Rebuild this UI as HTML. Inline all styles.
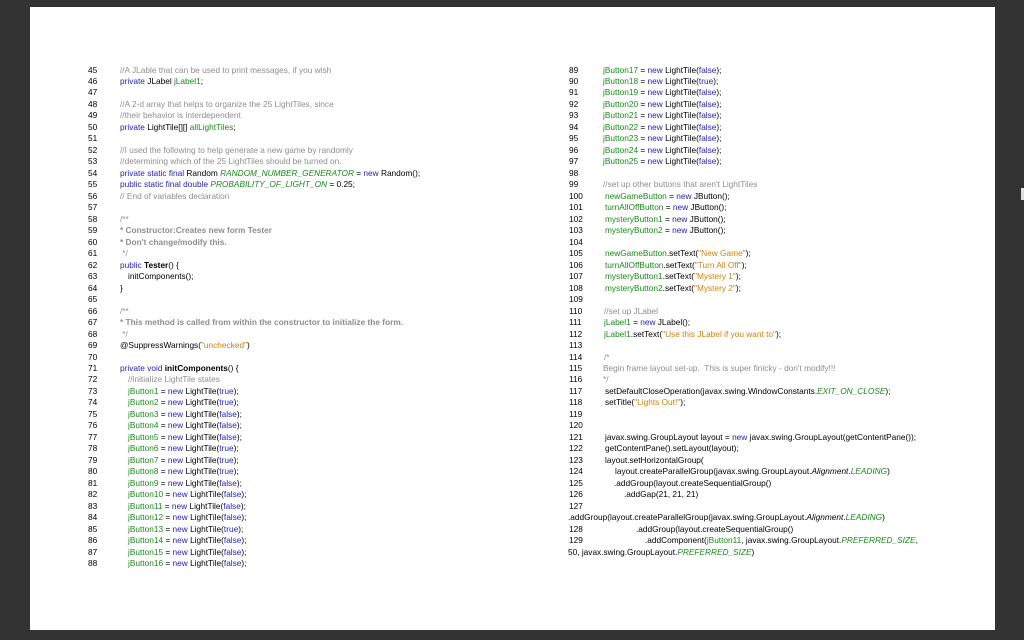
<!DOCTYPE html>
<html><head><meta charset="utf-8">
<style>
html,body{margin:0;padding:0;}
body{width:1024px;height:640px;background:#333;position:relative;overflow:hidden;font-family:"Liberation Sans",sans-serif;font-size:8.3px;color:#000;}
#page{position:absolute;left:30px;top:7px;width:965px;height:623px;background:#fff;}
.l{position:absolute;white-space:pre;line-height:10px;height:10px;}
.n{position:absolute;white-space:pre;line-height:10px;}
.k{color:#2424b0}.g{color:#1a8a1a}.c{color:#8e8e8e}.s{color:#c8840c}.b{font-weight:bold}.i{font-style:italic}
#mark{position:absolute;left:1021px;top:188px;width:3px;height:12px;background:#ddd;}
</style></head><body>
<div id="page"></div>
<div id="mark"></div>
<div id="L"></div>
<div id="R"></div>
<script>
var left=[
["45",0,'<span class="c">//A JLable that can be used to print messages, if you wish</span>'],
["46",0,'<span class="k">private</span> JLabel <span class="g">jLabel1</span>;'],
["47",0,''],
["48",0,'<span class="c">//A 2-d array that helps to organize the 25 LightTiles, since</span>'],
["49",0,'<span class="c">//their behavior is interdependent</span>'],
["50",0,'<span class="k">private</span> LightTile[][] <span class="g">allLightTiles</span>;'],
["51",0,''],
["52",0,'<span class="c">//I used the following to help generate a new game by randomly</span>'],
["53",0,'<span class="c">//determining which of the 25 LightTiles should be turned on.</span>'],
["54",0,'<span class="k">private static final</span> Random <span class="g i">RANDOM_NUMBER_GENERATOR</span> = <span class="k">new</span> Random();'],
["55",0,'<span class="k">public static final double</span> <span class="g i">PROBABILITY_OF_LIGHT_ON</span> = 0.25;'],
["56",0,'<span class="c">// End of variables declaration</span>'],
["57",0,''],
["58",0,'<span class="c">/**</span>'],
["59",0,'<span class="c b">* Constructor:Creates new form Tester</span>'],
["60",0,'<span class="c b">* Don\'t change/modify this.</span>'],
["61",0,'<span class="c"> */</span>'],
["62",0,'<span class="k">public</span> <span class="b">Tester</span>() {'],
["63",8,'initComponents();'],
["64",0,'}'],
["65",0,''],
["66",0,'<span class="c">/**</span>'],
["67",0,'<span class="c b">* This method is called from within the constructor to initialize the form.</span>'],
["68",0,'<span class="c"> */</span>'],
["69",0,'@SuppressWarnings(<span class="s">"unchecked"</span>)'],
["70",0,''],
["71",0,'<span class="k">private void</span> <span class="b">initComponents</span>() {'],
["72",8,'<span class="c">//initialize LightTile states</span>']
];
var vals=["true","true","false","false","false","true","true","true","false","false","false","false","true","false","false","false"];
for(var j=0;j<16;j++){left.push([String(73+j),8,'<span class="g">jButton'+(j+1)+'</span> = <span class="k">new</span> LightTile(<span class="k">'+vals[j]+'</span>);']);}
var rv=["false","true","false","false","false","false","false","false","false"];
var right=[];
for(var j=0;j<9;j++){right.push([String(89+j),35,'<span class="g">jButton'+(17+j)+'</span> = <span class="k">new</span> LightTile(<span class="k">'+rv[j]+'</span>);']);}
right=right.concat([
["98",35,''],
["99",35,'<span class="c">//set up other buttons that aren\'t LightTiles</span>'],
["100",37,'<span class="g">newGameButton</span> = <span class="k">new</span> JButton();'],
["101",37,'<span class="g">turnAllOffButton</span> = <span class="k">new</span> JButton();'],
["102",37,'<span class="g">mysteryButton1</span> = <span class="k">new</span> JButton();'],
["103",37,'<span class="g">mysteryButton2</span> = <span class="k">new</span> JButton();'],
["104",37,''],
["105",37,'<span class="g">newGameButton</span>.setText(<span class="s">"New Game"</span>);'],
["106",37,'<span class="g">turnAllOffButton</span>.setText(<span class="s">"Turn All Off"</span>);'],
["107",37,'<span class="g">mysteryButton1</span>.setText(<span class="s">"Mystery 1"</span>);'],
["108",37,'<span class="g">mysteryButton2</span>.setText(<span class="s">"Mystery 2"</span>);'],
["109",37,''],
["110",36,'<span class="c">//set up JLabel</span>'],
["111",36,'<span class="g">jLabel1</span> = <span class="k">new</span> JLabel();'],
["112",36,'<span class="g">jLabel1</span>.setText(<span class="s">"Use this JLabel if you want to"</span>);'],
["113",36,''],
["114",36,'<span class="c">/*</span>'],
["115",35,'<span class="c">Begin frame layout set-up.  This is super finicky - don\'t modify!!!</span>'],
["116",35,'<span class="c">*/</span>'],
["117",37,'setDefaultCloseOperation(javax.swing.WindowConstants.<span class="g i">EXIT_ON_CLOSE</span>);'],
["118",37,'setTitle(<span class="s">"Lights Out!"</span>);'],
["119",37,''],
["120",37,''],
["121",37,'javax.swing.GroupLayout layout = <span class="k">new</span> javax.swing.GroupLayout(getContentPane());'],
["122",37,'getContentPane().setLayout(layout);'],
["123",37,'layout.setHorizontalGroup('],
["124",47,'layout.createParallelGroup(javax.swing.GroupLayout.<span class="i">Alignment</span>.<span class="g i">LEADING</span>)'],
["125",46,'.addGroup(layout.createSequentialGroup()'],
["126",56,'.addGap(21, 21, 21)'],
["127",37,''],
["",0,'.addGroup(layout.createParallelGroup(javax.swing.GroupLayout.<span class="i">Alignment</span>.<span class="g i">LEADING</span>)'],
["128",68,'.addGroup(layout.createSequentialGroup()'],
["129",77,'.addComponent(<span class="g">jButton11</span>, javax.swing.GroupLayout.<span class="g i">PREFERRED_SIZE</span>,'],
["",0,'50, javax.swing.GroupLayout.<span class="g i">PREFERRED_SIZE</span>)']
]);
function render(arr,id,nx,cx){
 var h='';var lh=11.48;
 for(var i=0;i<arr.length;i++){
  var y=64.5+i*lh;
  if(arr[i][0]) h+='<div class="n" style="left:'+nx+'px;top:'+y+'px">'+arr[i][0]+'</div>';
  h+='<div class="l" style="left:'+(arr[i][0]===''?568:cx+arr[i][1])+'px;top:'+y+'px">'+arr[i][2]+'</div>';
 }
 document.getElementById(id).innerHTML=h;
}
render(left,'L',88,120);
render(right,'R',569,568);
</script>
</body></html>
